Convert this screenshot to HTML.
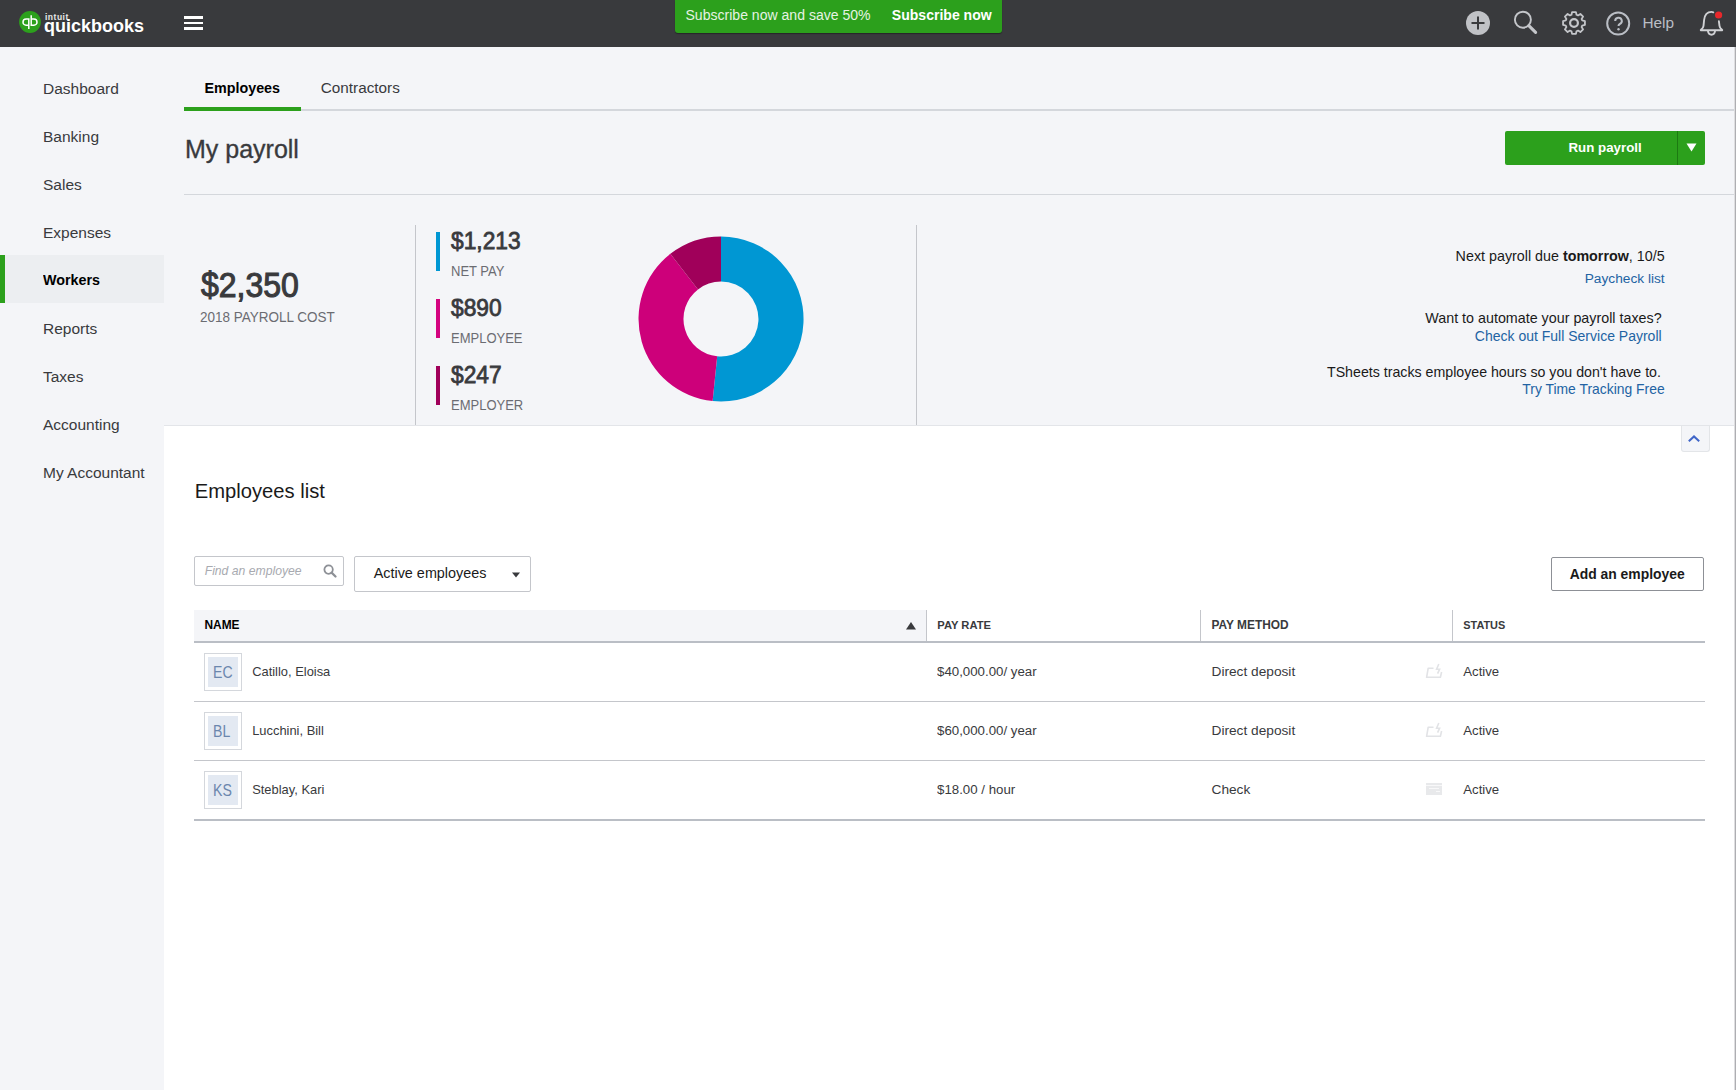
<!DOCTYPE html>
<html><head><meta charset="utf-8"><style>
html,body{margin:0;padding:0;width:1736px;height:1090px;overflow:hidden;background:#fff;}
body{position:relative;font-family:"Liberation Sans", sans-serif;}
.t{position:absolute;white-space:nowrap;line-height:1;}
.r{position:absolute;}
</style></head><body>
<div class="r" style="left:0px;top:0px;width:1736px;height:1090px;background:#ffffff;"></div>
<div class="r" style="left:0px;top:47px;width:164px;height:1043px;background:#f4f5f8;"></div>
<div class="r" style="left:164px;top:47px;width:1572px;height:379px;background:#f4f5f8;"></div>
<div class="r" style="left:0px;top:0px;width:1736px;height:47px;background:#393a3d;"></div>
<svg class="r" style="left:19px;top:11px" width="22" height="22" viewBox="0 0 22 22"><circle cx="11" cy="11" r="10.9" fill="#2ca01c"/><path d="M9.8 8.05 H7.1 A3.1 3.1 0 0 0 7.1 14.25 H9.8 M9.8 7.3 V17.9 M12.2 4.2 V15 M12.2 8.05 H14.9 A3.1 3.1 0 0 1 14.9 14.25 H12.2" fill="none" stroke="#fff" stroke-width="1.5"/></svg>
<div class="t" style="left:45.0px;top:12.7px;font-size:8.5px;font-weight:700;color:#e8e8e8;letter-spacing:0.5px;">intuit</div>
<div class="t" style="left:44.0px;top:17.0px;font-size:18px;font-weight:700;color:#fff;letter-spacing:0px;">quickbooks</div>
<div class="r" style="left:184px;top:16.1px;width:19px;height:2.75px;background:#fff;"></div>
<div class="r" style="left:184px;top:21.6px;width:19px;height:2.75px;background:#fff;"></div>
<div class="r" style="left:184px;top:27.1px;width:19px;height:2.75px;background:#fff;"></div>
<div class="r" style="left:675px;top:0px;width:327px;height:33px;background:#2ca01c;border-radius:0 0 3px 3px;box-shadow:0 1px 1px rgba(0,0,0,.35);"></div>
<div class="t" style="left:685.5px;top:8.3px;font-size:14.05px;font-weight:400;color:#e6f3e3;">Subscribe now and save 50%</div>
<div class="t" style="left:891.8px;top:8.3px;font-size:14.05px;font-weight:700;color:#fff;">Subscribe now</div>
<svg class="r" style="left:1466px;top:11px" width="24" height="24" viewBox="0 0 24 24"><circle cx="12" cy="12" r="12" fill="#c0c2c6"/><path d="M12 5.5V18.5M5.5 12H18.5" stroke="#393a3d" stroke-width="2"/></svg>
<svg class="r" style="left:1513px;top:10px" width="26" height="26" viewBox="0 0 26 26"><circle cx="9.9" cy="9.7" r="8" fill="none" stroke="#c4c6ca" stroke-width="1.9"/><path d="M15.8 15.6 L22.6 22.3" stroke="#c4c6ca" stroke-width="3.1" stroke-linecap="round"/></svg>
<svg class="r" style="left:1561px;top:10px" width="26" height="26" viewBox="-13 -13 26 26"><path fill="none" stroke="#c4c6ca" stroke-width="1.8" stroke-linejoin="round" d="M-2.51 -8.22 L-1.93 -10.93 L1.93 -10.93 L2.51 -8.22 L4.04 -7.59 L6.37 -9.09 L9.09 -6.37 L7.59 -4.04 L8.22 -2.51 L10.93 -1.93 L10.93 1.93 L8.22 2.51 L7.59 4.04 L9.09 6.37 L6.37 9.09 L4.04 7.59 L2.51 8.22 L1.93 10.93 L-1.93 10.93 L-2.51 8.22 L-4.04 7.59 L-6.37 9.09 L-9.09 6.37 L-7.59 4.04 L-8.22 2.51 L-10.93 1.93 L-10.93 -1.93 L-8.22 -2.51 L-7.59 -4.04 L-9.09 -6.37 L-6.37 -9.09 L-4.04 -7.59Z"/><circle r="3.9" fill="none" stroke="#c4c6ca" stroke-width="2.2"/></svg>
<svg class="r" style="left:1606px;top:11px" width="25" height="25" viewBox="0 0 25 25"><circle cx="12.2" cy="12.6" r="11" fill="none" stroke="#babec5" stroke-width="2"/><path d="M9.2 10 a3.3 3.3 0 1 1 4.6 3 c-1 .5 -1.3 1 -1.3 2" fill="none" stroke="#babec5" stroke-width="2"/><circle cx="12.5" cy="18.3" r="1.2" fill="#babec5"/></svg>
<div class="t" style="left:1642.4px;top:14.8px;font-size:15.4px;font-weight:400;color:#babec5;">Help</div>
<svg class="r" style="left:1699px;top:10px" width="27" height="27" viewBox="0 0 27 27"><path d="M14.3 2.3 C13.6 2 13 1.9 12.5 1.9 C8 1.9 5.6 5.5 5.1 10 L4.5 15.8 C4.3 17.5 3.5 18.6 2.2 19.5 C1.4 20.1 1.7 20.3 2.6 20.3 H22.4 C23.3 20.3 23.6 20.1 22.8 19.5 C21.5 18.6 20.7 17.5 20.5 15.8 L19.9 11.3 M8.8 20.6 C9.3 23.3 10.8 24.7 12.5 24.7 C14.2 24.7 15.7 23.3 16.2 20.6" fill="none" stroke="#d0d1d4" stroke-width="1.9" stroke-linecap="round" stroke-linejoin="round"/><circle cx="19.6" cy="5" r="3.6" fill="#e8282b"/></svg>
<div class="r" style="left:0px;top:255px;width:164px;height:48px;background:#eceef1;"></div>
<div class="r" style="left:0px;top:255px;width:5px;height:48px;background:#2ca01c;"></div>
<div class="t" style="left:43.0px;top:81.4px;font-size:15.5px;font-weight:400;color:#393a3d;">Dashboard</div>
<div class="t" style="left:43.0px;top:129.4px;font-size:15.5px;font-weight:400;color:#393a3d;">Banking</div>
<div class="t" style="left:43.0px;top:177.4px;font-size:15.5px;font-weight:400;color:#393a3d;">Sales</div>
<div class="t" style="left:43.0px;top:225.4px;font-size:15.5px;font-weight:400;color:#393a3d;">Expenses</div>
<div class="t" style="left:43.0px;top:271.8px;font-size:15px;font-weight:700;color:#000;transform:scaleX(0.955);transform-origin:0 0;">Workers</div>
<div class="t" style="left:43.0px;top:321.4px;font-size:15.5px;font-weight:400;color:#393a3d;">Reports</div>
<div class="t" style="left:43.0px;top:369.4px;font-size:15.5px;font-weight:400;color:#393a3d;">Taxes</div>
<div class="t" style="left:43.0px;top:417.4px;font-size:15.5px;font-weight:400;color:#393a3d;">Accounting</div>
<div class="t" style="left:43.0px;top:465.4px;font-size:15.5px;font-weight:400;color:#393a3d;">My Accountant</div>
<div class="r" style="left:184px;top:109px;width:1552px;height:2px;background:#d4d7dc;"></div>
<div class="r" style="left:184px;top:107px;width:117px;height:4px;background:#2ca01c;"></div>
<div class="t" style="left:204.5px;top:80.9px;font-size:14.3px;font-weight:700;color:#000;">Employees</div>
<div class="t" style="left:320.8px;top:80.0px;font-size:15.3px;font-weight:400;color:#393a3d;">Contractors</div>
<div class="t" style="left:185.0px;top:136.8px;font-size:25px;font-weight:400;color:#393a3d;-webkit-text-stroke:0.35px #393a3d;">My payroll</div>
<div class="r" style="left:184px;top:194px;width:1552px;height:1px;background:#d4d7dc;"></div>
<div class="r" style="left:1505px;top:131px;width:200px;height:34px;background:#2ca01c;border-radius:2px;"></div>
<div class="r" style="left:1677px;top:131px;width:1px;height:34px;background:#1d7a12;"></div>
<div class="t" style="left:1568.5px;top:140.7px;font-size:13.3px;font-weight:700;color:#fff;">Run payroll</div>
<svg class="r" style="left:1686px;top:143px" width="11" height="9" viewBox="0 0 11 9"><path d="M0.5 0.5H10.5L5.5 8.5Z" fill="#fff"/></svg>
<div class="t" style="left:200.5px;top:267.8px;font-size:34.5px;font-weight:400;color:#393a3d;-webkit-text-stroke:1.1px #393a3d;transform:scaleX(0.928);transform-origin:0 0;">$2,350</div>
<div class="t" style="left:199.6px;top:309.7px;font-size:14.5px;font-weight:400;color:#6b6c72;transform:scaleX(0.931);transform-origin:0 0;">2018 PAYROLL COST</div>
<div class="r" style="left:415px;top:225px;width:1px;height:200px;background:#c4c6cb;"></div>
<div class="r" style="left:916px;top:225px;width:1px;height:200px;background:#c4c6cb;"></div>
<div class="r" style="left:436px;top:232px;width:4px;height:39px;background:#0097d3;"></div>
<div class="t" style="left:451.0px;top:229.4px;font-size:23.8px;font-weight:400;color:#393a3d;-webkit-text-stroke:0.8px #393a3d;transform:scaleX(0.956);transform-origin:0 0;">$1,213</div>
<div class="t" style="left:451.0px;top:263.8px;font-size:14.4px;font-weight:400;color:#6b6c72;transform:scaleX(0.903);transform-origin:0 0;">NET PAY</div>
<div class="r" style="left:436px;top:299px;width:4px;height:39px;background:#d4037f;"></div>
<div class="t" style="left:451.0px;top:296.4px;font-size:23.8px;font-weight:400;color:#393a3d;-webkit-text-stroke:0.8px #393a3d;transform:scaleX(0.956);transform-origin:0 0;">$890</div>
<div class="t" style="left:451.0px;top:330.8px;font-size:14.4px;font-weight:400;color:#6b6c72;transform:scaleX(0.903);transform-origin:0 0;">EMPLOYEE</div>
<div class="r" style="left:436px;top:366px;width:4px;height:39px;background:#a0005a;"></div>
<div class="t" style="left:451.0px;top:363.4px;font-size:23.8px;font-weight:400;color:#393a3d;-webkit-text-stroke:0.8px #393a3d;transform:scaleX(0.956);transform-origin:0 0;">$247</div>
<div class="t" style="left:451.0px;top:397.8px;font-size:14.4px;font-weight:400;color:#6b6c72;transform:scaleX(0.903);transform-origin:0 0;">EMPLOYER</div>
<svg class="r" style="left:635.9px;top:234.0px" width="170" height="170" viewBox="-85 -85 170 170"><path fill="#0097d3" d="M0.00 -82.50 A82.5 82.5 0 1 1 -8.37 82.07 L-3.80 37.31 A37.5 37.5 0 1 0 0.00 -37.50Z"/><path fill="#cd007a" d="M-8.37 82.07 A82.5 82.5 0 0 1 -50.61 -65.15 L-23.00 -29.62 A37.5 37.5 0 0 0 -3.80 37.31Z"/><path fill="#a0005a" d="M-50.61 -65.15 A82.5 82.5 0 0 1 -0.00 -82.50 L-0.00 -37.50 A37.5 37.5 0 0 0 -23.00 -29.62Z"/></svg>
<div class="t" style="right:71.4px;text-align:right;top:248.5px;font-size:14.3px;font-weight:400;color:#1a1a1a;">Next payroll due <b style="font-weight:700">tomorrow</b>, 10/5</div>
<div class="t" style="right:71.4px;text-align:right;top:271.9px;font-size:13.7px;font-weight:400;color:#2263a3;">Paycheck list</div>
<div class="t" style="right:74.4px;text-align:right;top:311.3px;font-size:14.3px;font-weight:400;color:#1a1a1a;">Want to automate your payroll taxes?</div>
<div class="t" style="right:74.4px;text-align:right;top:329.3px;font-size:14px;font-weight:400;color:#2263a3;">Check out Full Service Payroll</div>
<div class="t" style="right:75.1px;text-align:right;top:364.9px;font-size:14.2px;font-weight:400;color:#1a1a1a;">TSheets tracks employee hours so you don't have to.</div>
<div class="t" style="right:71.4px;text-align:right;top:383.2px;font-size:13.9px;font-weight:400;color:#2263a3;">Try Time Tracking Free</div>
<div class="r" style="left:1681px;top:426px;width:29px;height:26px;background:#f4f5f8;box-sizing:border-box;border:1px solid #e3e5e8;border-top:none;border-radius:0 0 3px 3px;"></div>
<svg class="r" style="left:1687px;top:434px" width="14" height="10" viewBox="0 0 14 10"><path d="M1.8 7.2L7 2.4L12.2 7.2" fill="none" stroke="#4066c8" stroke-width="2"/></svg>
<div class="r" style="left:164px;top:425px;width:1572px;height:1px;background:#e3e5e9;"></div>
<div class="r" style="left:1734px;top:47px;width:1px;height:1043px;background:#dedee0;"></div>
<div class="r" style="left:1735px;top:47px;width:1px;height:1043px;background:#aeaeb2;"></div>
<div class="t" style="left:194.8px;top:481.4px;font-size:20.2px;font-weight:400;color:#1a1a1a;">Employees list</div>
<div class="r" style="left:194px;top:556px;width:150px;height:30px;background:#fff;box-sizing:border-box;border:1px solid #c4c6cb;border-radius:2px;"></div>
<div class="t" style="left:204.7px;top:564.7px;font-size:12.2px;font-weight:400;color:#a8aab0;"><i>Find an employee</i></div>
<svg class="r" style="left:323px;top:564px" width="14" height="14" viewBox="0 0 14 14"><circle cx="5.6" cy="5.6" r="4.2" fill="none" stroke="#8d9096" stroke-width="1.8"/><path d="M8.6 8.6L12.5 12.5" stroke="#8d9096" stroke-width="2.2" stroke-linecap="round"/></svg>
<div class="r" style="left:354px;top:556px;width:177px;height:36px;background:#fff;box-sizing:border-box;border:1px solid #c4c6cb;border-radius:2px;"></div>
<div class="t" style="left:373.7px;top:566.1px;font-size:14.4px;font-weight:400;color:#1a1a1a;">Active employees</div>
<svg class="r" style="left:511px;top:572px" width="10" height="6" viewBox="0 0 10 6"><path d="M1 0.5H9L5 5.5Z" fill="#393a3d"/></svg>
<div class="r" style="left:1551px;top:557px;width:153px;height:34px;background:#fff;box-sizing:border-box;border:1px solid #8d9096;border-radius:2px;"></div>
<div class="t" style="left:1569.7px;top:567.6px;font-size:13.9px;font-weight:700;color:#1a1a1a;">Add an employee</div>
<div class="r" style="left:194px;top:610px;width:732px;height:31px;background:#f4f5f8;"></div>
<div class="r" style="left:926px;top:610px;width:1px;height:31px;background:#c4c6cb;"></div>
<div class="r" style="left:1200px;top:610px;width:1px;height:31px;background:#c4c6cb;"></div>
<div class="r" style="left:1452px;top:610px;width:1px;height:31px;background:#c4c6cb;"></div>
<div class="r" style="left:194px;top:641px;width:1511px;height:2px;background:#babec5;"></div>
<div class="t" style="left:204.5px;top:619.7px;font-size:11.9px;font-weight:700;color:#000;">NAME</div>
<svg class="r" style="left:905px;top:621px" width="12" height="9" viewBox="0 0 12 9"><path d="M1 8.5H11L6 1Z" fill="#393a3d"/></svg>
<div class="t" style="left:937.3px;top:619.5px;font-size:11.2px;font-weight:700;color:#393a3d;">PAY RATE</div>
<div class="t" style="left:1211.5px;top:619.7px;font-size:11.9px;font-weight:700;color:#393a3d;">PAY METHOD</div>
<div class="t" style="left:1463.3px;top:620.3px;font-size:10.9px;font-weight:700;color:#393a3d;">STATUS</div>
<div class="r" style="left:204px;top:653px;width:38px;height:38px;background:#fff;box-sizing:border-box;border:1px solid #d4d7dc;"></div>
<div class="r" style="left:208px;top:657px;width:30px;height:30px;background:#e3e9f2;"></div>
<div class="t" style="left:212.5px;top:665.2px;font-size:16.6px;font-weight:400;color:#6b86ad;transform:scaleX(0.85);transform-origin:0 0;">EC</div>
<div class="t" style="left:252.2px;top:665.5px;font-size:12.9px;font-weight:400;color:#393a3d;">Catillo, Eloisa</div>
<div class="t" style="left:937.3px;top:664.8px;font-size:13.7px;font-weight:400;color:#393a3d;transform:scaleX(0.97);transform-origin:0 0;">$40,000.00/ year</div>
<div class="t" style="left:1211.5px;top:664.8px;font-size:13.7px;font-weight:400;color:#393a3d;">Direct deposit</div>
<div class="t" style="left:1463.3px;top:665.2px;font-size:13.2px;font-weight:400;color:#393a3d;">Active</div>
<svg class="r" style="left:1424px;top:663px" width="20" height="16" viewBox="0 0 20 16"><path d="M9.5 5.2H4.2L2.6 14.3H16.4L17.6 9" fill="none" stroke="#e2e3e6" stroke-width="1.6" stroke-linejoin="round"/><path d="M14.8 1L12.6 6.2H15.6L13.6 10.6" fill="none" stroke="#e2e3e6" stroke-width="1.6"/></svg>
<div class="r" style="left:194px;top:701px;width:1511px;height:1px;background:#c4c6cb;"></div>
<div class="r" style="left:204px;top:712px;width:38px;height:38px;background:#fff;box-sizing:border-box;border:1px solid #d4d7dc;"></div>
<div class="r" style="left:208px;top:716px;width:30px;height:30px;background:#e3e9f2;"></div>
<div class="t" style="left:212.5px;top:724.2px;font-size:16.6px;font-weight:400;color:#6b86ad;transform:scaleX(0.85);transform-origin:0 0;">BL</div>
<div class="t" style="left:252.2px;top:724.5px;font-size:12.9px;font-weight:400;color:#393a3d;">Lucchini, Bill</div>
<div class="t" style="left:937.3px;top:723.8px;font-size:13.7px;font-weight:400;color:#393a3d;transform:scaleX(0.97);transform-origin:0 0;">$60,000.00/ year</div>
<div class="t" style="left:1211.5px;top:723.8px;font-size:13.7px;font-weight:400;color:#393a3d;">Direct deposit</div>
<div class="t" style="left:1463.3px;top:724.2px;font-size:13.2px;font-weight:400;color:#393a3d;">Active</div>
<svg class="r" style="left:1424px;top:722px" width="20" height="16" viewBox="0 0 20 16"><path d="M9.5 5.2H4.2L2.6 14.3H16.4L17.6 9" fill="none" stroke="#e2e3e6" stroke-width="1.6" stroke-linejoin="round"/><path d="M14.8 1L12.6 6.2H15.6L13.6 10.6" fill="none" stroke="#e2e3e6" stroke-width="1.6"/></svg>
<div class="r" style="left:194px;top:760px;width:1511px;height:1px;background:#c4c6cb;"></div>
<div class="r" style="left:204px;top:771px;width:38px;height:38px;background:#fff;box-sizing:border-box;border:1px solid #d4d7dc;"></div>
<div class="r" style="left:208px;top:775px;width:30px;height:30px;background:#e3e9f2;"></div>
<div class="t" style="left:212.5px;top:783.2px;font-size:16.6px;font-weight:400;color:#6b86ad;transform:scaleX(0.85);transform-origin:0 0;">KS</div>
<div class="t" style="left:252.2px;top:783.5px;font-size:12.9px;font-weight:400;color:#393a3d;">Steblay, Kari</div>
<div class="t" style="left:937.3px;top:782.8px;font-size:13.7px;font-weight:400;color:#393a3d;transform:scaleX(0.97);transform-origin:0 0;">$18.00 / hour</div>
<div class="t" style="left:1211.5px;top:782.8px;font-size:13.7px;font-weight:400;color:#393a3d;">Check</div>
<div class="t" style="left:1463.3px;top:783.2px;font-size:13.2px;font-weight:400;color:#393a3d;">Active</div>
<div class="r" style="left:1426px;top:783px;width:16px;height:12px;background:#e8e9eb;"></div>
<div class="r" style="left:1426px;top:785px;width:16px;height:1px;background:#f8f8f9;"></div>
<div class="r" style="left:1429px;top:788px;width:10px;height:1px;background:#f8f8f9;"></div>
<div class="r" style="left:1436px;top:791px;width:4px;height:1px;background:#f8f8f9;"></div>
<div class="r" style="left:194px;top:819px;width:1511px;height:2px;background:#babec5;"></div>

</body></html>
